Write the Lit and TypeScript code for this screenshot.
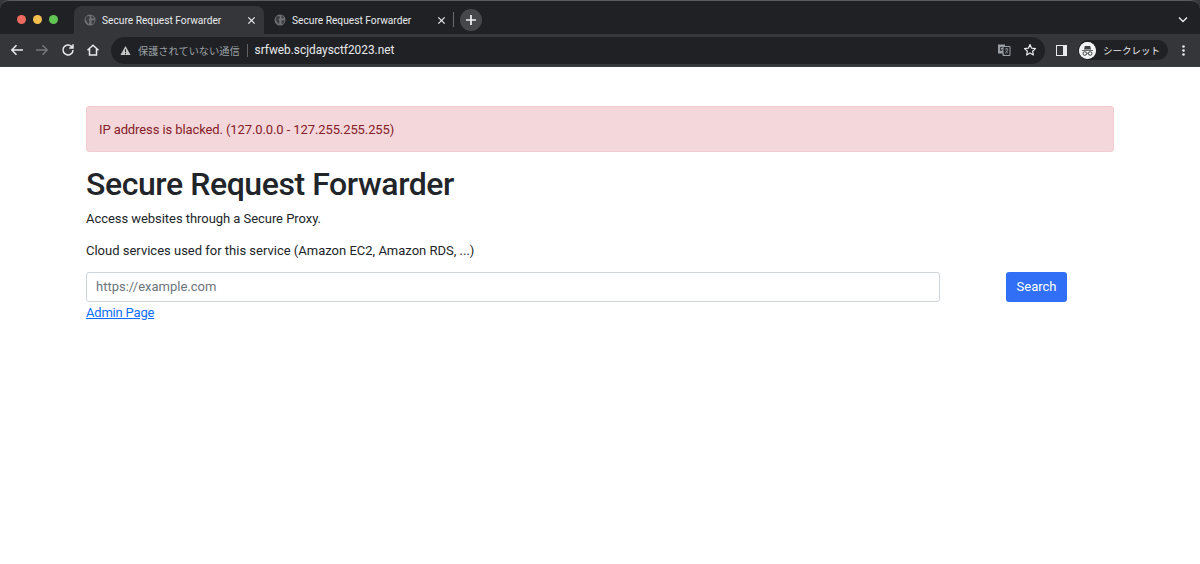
import { LitElement, html, css, svg } from "lit";
import { customElement } from "lit/decorators.js";

const globe = html`<svg class="globe" viewBox="0 0 12 12"><circle cx="6" cy="6" r="5.5" fill="#6f7175"/><path d="M2 2.6 5.2 2 6 3.6 4.6 5.4 5.6 7.2 4.6 10.4 3 8 1.6 5.6ZM7.4 1.6 10 3.2 9 4.8 7.4 4ZM7.6 6.2 10.8 6.4 9.6 9.4 7.6 10Z" fill="#3b3d40"/></svg>`;
const close = html`<svg class="x" viewBox="0 0 10 10"><path d="M1.5 1.5 8.5 8.5M8.5 1.5 1.5 8.5" stroke="#e8eaed" stroke-width="1.4" fill="none"/></svg>`;
const ic = (d: unknown, color = "#e8eaed") => html`<svg class="ic" viewBox="0 0 16 16" fill="none" stroke=${color} stroke-width="1.5">${d}</svg>`;

@customElement("app-root")
export class AppRoot extends LitElement {
  static styles = css`
    :host { display: block; width: 1200px; height: 564px; background: #fff; overflow: hidden; font-family: Roboto, "Liberation Sans", sans-serif; }
    .chrome { height: 67px; background: #35363a; border-bottom: 1px solid #3c3d40; box-sizing: border-box; display: flex; flex-direction: column; }
    .strip { height: 34px; background: #202124; border-top: 1px solid #5a5b5e; box-sizing: border-box; border-radius: 9px 9px 0 0; display: flex; align-items: flex-end; position: relative; }
    .lights { display: flex; gap: 7px; padding: 0 0 10px 17px; width: 74px; flex: none; box-sizing: border-box; }
    .lights i { width: 9px; height: 9px; border-radius: 50%; flex: none; }
    .tab { width: 190px; height: 28px; flex: none; box-sizing: border-box; display: flex; align-items: center; padding: 0 8px 0 10px; color: #e8eaed; font-size: 10.2px; white-space: nowrap; }
    .tab.active { background: #35363a; border-radius: 8px 8px 0 0; }
    .tab span { flex: 1; margin-left: 6px; }
    .globe { width: 12px; height: 12px; flex: none; }
    .x { width: 9px; height: 9px; flex: none; }
    .sep { width: 1px; height: 15px; background: #6a6b6e; margin: 0 0 7px -1px; }
    .plus { width: 22px; height: 22px; border-radius: 50%; background: #46474a; margin: 0 0 3px 6px; display: flex; align-items: center; justify-content: center; }
    .plus svg { width: 12px; height: 12px; }
    .chev { position: absolute; right: 12px; top: 15px; width: 10px; height: 7px; }
    .bar { flex: 1; display: flex; align-items: center; }
    .nav { display: flex; width: 111px; flex: none; padding-left: 9px; box-sizing: border-box; gap: 9.3px; }
    .ic { width: 16px; height: 16px; flex: none; }
    .omni { width: 934px; height: 27px; background: #202124; border-radius: 14px; display: flex; align-items: center; box-sizing: border-box; padding: 0 8px 0 9px; font-size: 11px; }
    .warn { width: 11px; height: 11px; flex: none; }
    .insecure { color: #9aa0a6; font-family: "Noto Sans CJK JP", sans-serif; font-size: 10.2px; margin-left: 7px; white-space: nowrap; }
    .div { width: 1px; height: 13px; background: #5f6368; margin: 0 7px; }
    .url { color: #e8eaed; flex: 1; font-size: 11.85px; }
    .omni .ic { width: 14px; height: 14px; }
    .trans { margin-right: 12px; }
    .right { display: flex; align-items: center; padding-left: 10px; flex: 1; }
    .panel { width: 11px; height: 11px; box-sizing: border-box; border: 1.5px solid #e8eaed; border-right-width: 4.5px; background: #35363a; margin-left: 1px; }
    .incog { display: flex; align-items: center; height: 20px; width: 90px; background: #202124; border-radius: 10px; margin-left: 11px; color: #e8eaed; font-size: 9.5px; font-family: "Noto Sans CJK JP", sans-serif; box-sizing: border-box; white-space: nowrap; }
    .avatar { width: 17px; height: 17px; border-radius: 50%; background: #f1f3f4; margin: 0 7px 0 1px; flex: none; }
    .dots { width: 3px; height: 11px; margin-left: 14px; }
    .page { padding: 39px 86px 0; color: #212529; font-size: 13px; line-height: 19.5px; }
    .alert { height: 46px; box-sizing: border-box; background: #f4d7da; border: 1px solid #f2cbd0; border-radius: 3px; color: #842029; display: flex; align-items: center; padding: 1px 12px 0; letter-spacing: -0.1px; }
    h1 { font-weight: 500; font-size: 32px; line-height: 38px; margin: 13px 0 6px; letter-spacing: -0.42px; }
    p { margin: 0 0 12.5px; }
    .lead { letter-spacing: -0.05px; }
    .cloud { margin-bottom: 11.5px; }
    .form { display: flex; margin-bottom: 1px; }
    .input { width: 854px; height: 30px; box-sizing: border-box; border: 1px solid #ced4da; border-radius: 3px; padding: 0 9px; display: flex; align-items: center; color: #6c757d; }
    .btn { margin-left: 66px; width: 61px; height: 30px; background: #316ff6; border-radius: 3px; color: #fff; display: flex; align-items: center; justify-content: center; }
    a { color: #0d6efd; text-decoration: underline; display: inline-block; letter-spacing: -0.2px; }
  `;
  render() {
    return html`
      <div class="chrome">
        <div class="strip">
          <div class="lights"><i style="background:#ed6a5e"></i><i style="background:#f4bf4f"></i><i style="background:#61c554"></i></div>
          <div class="tab active">${globe}<span>Secure Request Forwarder</span>${close}</div>
          <div class="tab">${globe}<span>Secure Request Forwarder</span>${close}</div>
          <div class="sep"></div>
          <div class="plus"><svg viewBox="0 0 12 12"><path d="M6 1V11M1 6H11" stroke="#f1f3f4" stroke-width="1.7"/></svg></div>
          <svg class="chev" viewBox="0 0 10 7"><path d="M1 1.5 5 5.5 9 1.5" stroke="#e8eaed" stroke-width="1.4" fill="none"/></svg>
        </div>
        <div class="bar">
          <div class="nav">
            ${ic(svg`<path d="M14 8H3M7.5 3.2 2.8 8l4.7 4.8"/>`)}
            ${ic(svg`<path d="M2 8H13M8.5 3.2 13.2 8l-4.7 4.8"/>`, "#75777a")}
            ${ic(svg`<path d="M13 8a5 5 0 1 1-1.5-3.6L13 6M13 2.2V6H9.2"/>`)}
            ${ic(svg`<path d="M2.5 8.2 8 3.2l5.5 5M4.5 7v6h7V7"/>`)}
          </div>
          <div class="omni">
            <svg class="warn" viewBox="0 0 12 12"><path d="M6 1 11.5 11H.5Z" fill="#c4c7c5"/><path d="M6 4.5V8M6 8.8V10" stroke="#202124" stroke-width="1.1"/></svg>
            <span class="insecure">保護されていない通信</span>
            <div class="div"></div>
            <span class="url">srfweb.scjdaysctf2023.net</span>
            <svg class="ic trans" viewBox="0 0 14 14"><rect x="1" y="1.5" width="7" height="9" fill="#9aa0a6"/><path d="M6 3.5H13V12.5H6Z" fill="#202124" stroke="#9aa0a6"/><path d="M6 10.5 7.5 12.5" stroke="#9aa0a6"/><path d="M8 6H11M9.5 5V6M10.8 6C10.5 8 9.5 9.5 8 10.2M8.8 7.5C9.3 8.8 10 9.6 11 10" stroke="#9aa0a6" stroke-width=".8" fill="none"/><path d="M5.6 4.4H3.4V7.4H5V6.2" stroke="#202124" stroke-width=".9" fill="none"/></svg>
            <svg class="ic" viewBox="0 0 14 14"><path d="M7 1.6 8.6 5.2 12.5 5.6 9.6 8.2 10.4 12 7 10 3.6 12 4.4 8.2 1.5 5.6 5.4 5.2Z" fill="none" stroke="#e8eaed" stroke-width="1.2" stroke-linejoin="round"/></svg>
          </div>
          <div class="right">
            <div class="panel"></div>
            <div class="incog">
              <svg class="avatar" viewBox="0 0 17 17"><circle cx="8.5" cy="8.5" r="8.5" fill="#f1f3f4"/><path d="M3 8H14V8.8H3ZM5 7.6 5.8 4H11.2L12 7.6Z" fill="#3c4043"/><circle cx="5.8" cy="11.5" r="1.8" fill="none" stroke="#3c4043"/><circle cx="11.2" cy="11.5" r="1.8" fill="none" stroke="#3c4043"/><path d="M7.5 11.3H9.5" stroke="#3c4043" stroke-width=".8"/></svg>
              シークレット
            </div>
            <svg class="dots" viewBox="0 0 3 11"><circle cx="1.5" cy="1.5" r="1.3" fill="#e8eaed"/><circle cx="1.5" cy="5.5" r="1.3" fill="#e8eaed"/><circle cx="1.5" cy="9.5" r="1.3" fill="#e8eaed"/></svg>
          </div>
        </div>
      </div>
      <div class="page">
        <div class="alert">IP address is blacked. (127.0.0.0 - 127.255.255.255)</div>
        <h1>Secure Request Forwarder</h1>
        <p class="lead">Access websites through a Secure Proxy.</p>
        <p class="cloud">Cloud services used for this service (Amazon EC2, Amazon RDS, ...)</p>
        <div class="form">
          <div class="input">https://example.com</div>
          <div class="btn">Search</div>
        </div>
        <a href="#">Admin Page</a>
      </div>
    `;
  }
}
